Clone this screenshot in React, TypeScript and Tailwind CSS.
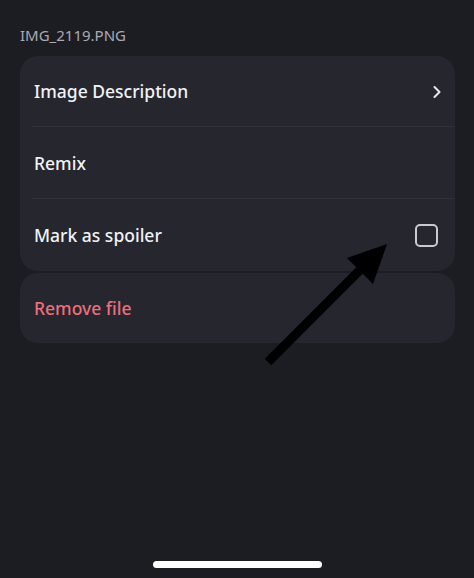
import { ChevronRight } from 'lucide-react';

const font = { fontFamily: '"Noto Sans", Inter, sans-serif' };

function Row({ label, children, divider, tall = 72 }: { label: string; children?: React.ReactNode; divider?: boolean; tall?: number }) {
  return (
    <div className="relative flex items-center justify-between pl-[14px] pr-[17px]" style={{ height: tall }}>
      <span className="text-[17.5px] font-medium text-[#f1f2f4]">{label}</span>
      {children}
      {divider && <div className="absolute bottom-0 left-[12px] right-0 h-px bg-[#2f3038]" />}
    </div>
  );
}

export default function App() {
  return (
    <div className="relative h-[578px] w-[474px] overflow-hidden bg-[#1c1d22]" style={font}>
      <div className="pl-5 pr-[19px] pt-[25px]">
        <div className="text-[15px] leading-5 text-[#a9abb2]">IMG_2119.PNG</div>

        {/* attachment options */}
        <div className="mt-[11px] overflow-hidden rounded-[18px] bg-[#25262e]">
          <Row label="Image Description" divider tall={71}>
            <ChevronRight className="-mr-[9px] h-5 w-5 text-[#e4e5e8]" strokeWidth={2.5} />
          </Row>
          <Row label="Remix" divider />
          <Row label="Mark as spoiler">
            <div className="h-[23px] w-[23px] rounded-[5px] border-2 border-[#c9cace]" />
          </Row>
        </div>

        <div className="mt-[2px] flex h-[70px] items-center rounded-[18px] bg-[#25262e] pl-[14px]">
          <span className="text-[17.5px] font-medium text-[#ed6f79]">Remove file</span>
        </div>
      </div>

      {/* pointer arrow drawn over the menu */}
      <svg className="pointer-events-none absolute left-0 top-0" width="474" height="578">
        <line x1="268" y1="362" x2="362" y2="268" stroke="#000" strokeWidth="9" />
        <polygon points="387,244 347,258 373,284" fill="#000" />
      </svg>

      {/* home indicator */}
      <div className="absolute bottom-[10px] left-[153px] h-[7px] w-[169px] rounded-full bg-white" />
    </div>
  );
}
